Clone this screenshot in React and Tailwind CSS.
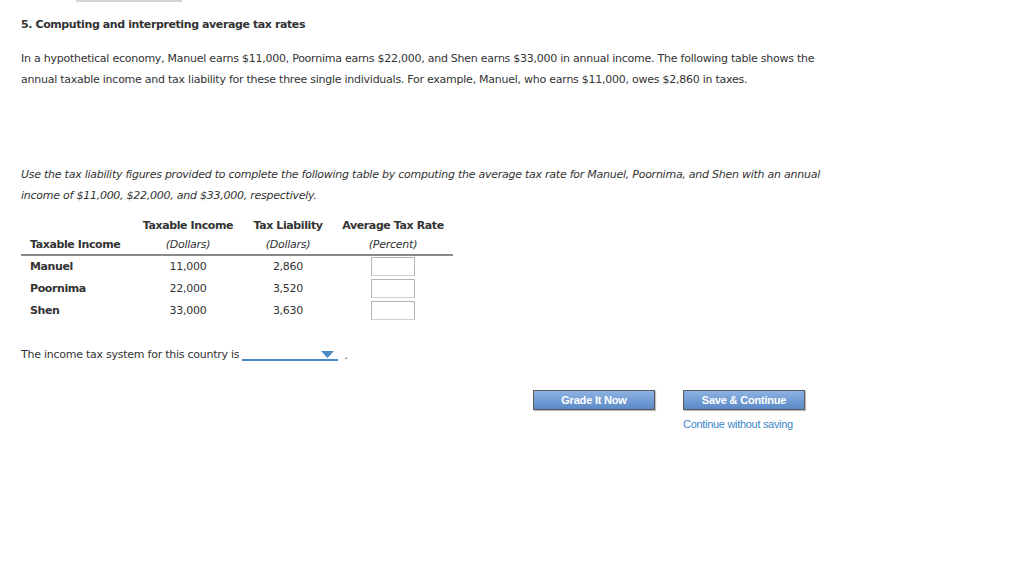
export default function App() {
  const rows = [
    ["Manuel", "11,000", "2,860"],
    ["Poornima", "22,000", "3,520"],
    ["Shen", "33,000", "3,630"],
  ];
  const btn =
    "w-[122px] h-[20px] border border-[#5a5a5a] bg-gradient-to-b from-[#8cb2e2] to-[#5b8ac8] text-white font-bold text-[11px] leading-[18px] tracking-[-0.2px] font-['Liberation_Sans',Arial,sans-serif] shadow-[1px_1px_1px_rgba(0,0,0,0.25)]";
  return (
    <div className="w-[1024px] h-[576px] bg-white text-[#333] text-[11px] tracking-[-0.25px] font-['DejaVu_Sans',sans-serif] overflow-hidden whitespace-nowrap">
      <div className="ml-[76px] w-[106px] h-[2px] bg-[#d6d6d6]" />
      <div className="pl-[21px]">
        <h2 className="mt-[15px] font-bold text-[11px] leading-[16px] tracking-[-0.4px]">
          5. Computing and interpreting average tax rates
        </h2>
        <p className="mt-[14.5px] leading-[21px]">
          In a hypothetical economy, Manuel earns $11,000, Poornima earns $22,000, and Shen earns $33,000 in annual income. The following table shows the
          <br />
          annual taxable income and tax liability for these three single individuals. For example, Manuel, who earns $11,000, owes $2,860 in taxes.
        </p>
        <p className="mt-[74px] leading-[21px] italic">
          Use the tax liability figures provided to complete the following table by computing the average tax rate for Manuel, Poornima, and Shen with an annual
          <br />
          income of $11,000, $22,000, and $33,000, respectively.
        </p>
        <table className="mt-[10px] border-collapse w-[432px] table-fixed">
          <thead>
            <tr className="h-[19px] leading-[19px]">
              <th className="w-[120px]"></th>
              <th className="w-[94px] text-center font-bold tracking-[-0.4px]">Taxable Income</th>
              <th className="w-[106px] text-center font-bold tracking-[-0.4px]">Tax Liability</th>
              <th className="w-[104px] text-center font-bold tracking-[-0.4px]">Average Tax Rate</th>
              <th className="w-[8px]"></th>
            </tr>
            <tr className="h-[19px] leading-[19px] border-b-2 border-[#8a8a8a]">
              <th className="text-left pl-[9px] font-bold tracking-[-0.4px]">Taxable Income</th>
              <th className="text-center italic font-normal">(Dollars)</th>
              <th className="text-center italic font-normal">(Dollars)</th>
              <th className="text-center italic font-normal">(Percent)</th>
              <th></th>
            </tr>
          </thead>
          <tbody>
            {rows.map(([n, a, b]) => (
              <tr key={n} className="h-[22.5px]">
                <td className="pl-[9px] pt-[1px] font-bold tracking-[-0.4px]">{n}</td>
                <td className="text-center pt-[1px]">{a}</td>
                <td className="text-center pt-[1px]">{b}</td>
                <td className="text-center">
                  <div className="inline-block align-middle w-[44px] h-[19px] border border-[#b5b5b5] border-b-[#d0d0d0] bg-white" />
                </td>
                <td></td>
              </tr>
            ))}
          </tbody>
        </table>
        <div className="mt-[20px] leading-[21px] flex items-center">
          <span>The income tax system for this country is</span>
          <span className="ml-[3px] relative inline-block w-[96px] h-[14px] border-b-2 border-[#4a8ac6]">
            <svg className="absolute right-[4px] top-[4px]" width="13" height="7" viewBox="0 0 13 7">
              <polygon points="0,0 13,0 6.5,7" fill="#4a8ac6" />
            </svg>
          </span>
          <span className="ml-[6px] mt-[3px]">.</span>
        </div>
        <div className="mt-[24px] flex">
          <div className="ml-[512px] flex flex-col">
            <div className="flex gap-[28px]">
              <button className={btn}>Grade It Now</button>
              <button className={btn}>Save &amp; Continue</button>
            </div>
            <a className="ml-[150px] mt-[7px] text-[#3a86cc] text-[11px] leading-[14px] tracking-[-0.3px] font-['Liberation_Sans',Arial,sans-serif]">
              Continue without saving
            </a>
          </div>
        </div>
      </div>
    </div>
  );
}
